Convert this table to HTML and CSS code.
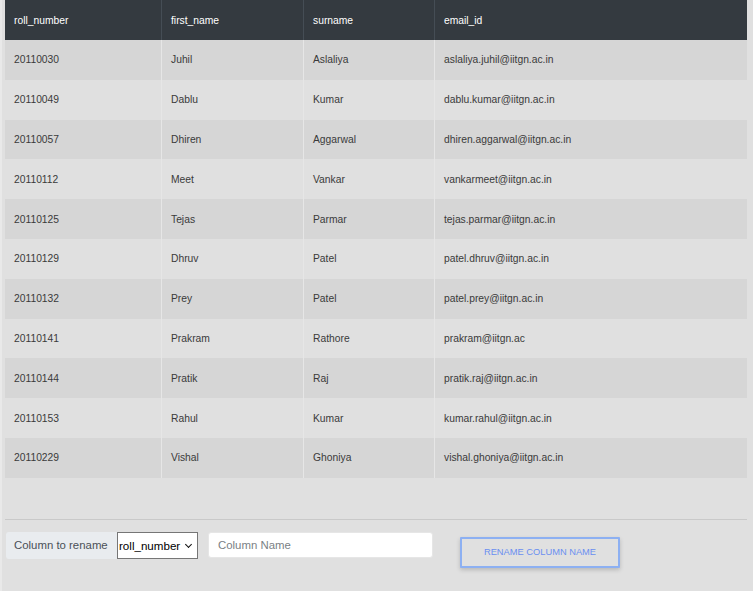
FILE: index.html
```html
<!DOCTYPE html>
<html>
<head>
<meta charset="utf-8">
<link rel="stylesheet" href="styles.css">
</head>
<body>
<div class="page">
  <table class="data">
    <thead>
      <tr><th class="c1">roll_number</th><th class="c2">first_name</th><th class="c3">surname</th><th class="c4">email_id</th></tr>
    </thead>
    <tbody>
      <tr><td>20110030</td><td>Juhil</td><td>Aslaliya</td><td>aslaliya.juhil@iitgn.ac.in</td></tr>
      <tr><td>20110049</td><td>Dablu</td><td>Kumar</td><td>dablu.kumar@iitgn.ac.in</td></tr>
      <tr><td>20110057</td><td>Dhiren</td><td>Aggarwal</td><td>dhiren.aggarwal@iitgn.ac.in</td></tr>
      <tr><td>20110112</td><td>Meet</td><td>Vankar</td><td>vankarmeet@iitgn.ac.in</td></tr>
      <tr><td>20110125</td><td>Tejas</td><td>Parmar</td><td>tejas.parmar@iitgn.ac.in</td></tr>
      <tr><td>20110129</td><td>Dhruv</td><td>Patel</td><td>patel.dhruv@iitgn.ac.in</td></tr>
      <tr><td>20110132</td><td>Prey</td><td>Patel</td><td>patel.prey@iitgn.ac.in</td></tr>
      <tr><td>20110141</td><td>Prakram</td><td>Rathore</td><td>prakram@iitgn.ac</td></tr>
      <tr><td>20110144</td><td>Pratik</td><td>Raj</td><td>pratik.raj@iitgn.ac.in</td></tr>
      <tr><td>20110153</td><td>Rahul</td><td>Kumar</td><td>kumar.rahul@iitgn.ac.in</td></tr>
      <tr><td>20110229</td><td>Vishal</td><td>Ghoniya</td><td>vishal.ghoniya@iitgn.ac.in</td></tr>
    </tbody>
  </table>
  <hr class="sep">
  <div class="form-row">
    <div class="group">
      <span class="group-label">Column to rename</span>
      <span class="select-wrap">
        <select class="col-select">
          <option>roll_number</option>
          <option>first_name</option>
          <option>surname</option>
          <option>email_id</option>
        </select>
      </span>
    </div>
    <input class="name-input" type="text" placeholder="Column Name">
    <button class="rename-btn">RENAME COLUMN NAME</button>
  </div>
</div>
</body>
</html>
```

FILE: styles.css
```css
html, body {
  margin: 0;
  padding: 0;
  height: 100%;
  background: #e9e9e9;
  font-family: "Liberation Sans", Arial, sans-serif;
}
.page {
  margin-left: 2px;
  min-height: 591px;
  background: #e0e0e0;
  padding: 0 6px 0 3px;
  box-sizing: border-box;
}
.data {
  width: 742px;
  border-collapse: collapse;
  font-size: 10.3px;
  color: #3a3a3a;
}
.data th {
  background: #343a40;
  color: #ffffff;
  font-weight: normal;
  text-align: left;
  height: 40px;
  padding: 0 0 0 9px;
  border-left: 1px solid #454d55;
}
.data th:first-child, .data td:first-child { border-left: none; }
.data th.c1 { width: 147px; }
.data th.c2 { width: 132px; }
.data th.c3 { width: 121px; }
.data td {
  height: 39.8px;
  padding: 0 0 0 9px;
  border-left: 1px solid #e6e6e6;
}
.data tbody tr:nth-child(odd) td { background: #d6d6d6; }
.data tbody tr:nth-child(even) td { background: #e0e0e0; }
.sep {
  margin: 41px 0 0 0;
  border: none;
  border-top: 1px solid #c9c9c9;
  width: 742px;
}
.form-row {
  display: flex;
  align-items: flex-start;
  padding-top: 12px;
  padding-left: 1px;
}
.group {
  display: flex;
  align-items: stretch;
  height: 27px;
}
.group-label {
  display: flex;
  align-items: center;
  background: #e9ecef;
  color: #495057;
  font-size: 11.4px;
  padding: 0 8px 0 8px;
  width: 111px;
  box-sizing: border-box;
  border-radius: 3px 0 0 3px;
}
.select-wrap {
  position: relative;
  display: flex;
}
.select-wrap::after {
  content: "";
  position: absolute;
  right: 7px;
  top: 10px;
  width: 4px;
  height: 4px;
  border-right: 1.6px solid #111;
  border-bottom: 1.6px solid #111;
  transform: rotate(45deg);
  pointer-events: none;
}
.col-select {
  -webkit-appearance: none;
  appearance: none;
  width: 81px;
  height: 27px;
  box-sizing: border-box;
  font-family: "Liberation Sans", Arial, sans-serif;
  font-size: 11.6px;
  color: #000;
  background: #fff;
  border: 1px solid #767676;
  border-radius: 0;
  padding: 0 14px 0 1px;
  margin: 0;
}
.name-input {
  margin-left: 10px;
  width: 225px;
  height: 26px;
  box-sizing: border-box;
  border: 1px solid #e6e6e6;
  border-radius: 3px;
  background: #fff;
  padding: 0 9px;
  font-family: "Liberation Sans", Arial, sans-serif;
  font-size: 11.4px;
  color: #495057;
}
.name-input::placeholder { color: #7a7f85; }
.rename-btn {
  margin-left: 27px;
  margin-top: 5px;
  width: 160px;
  height: 31px;
  box-sizing: border-box;
  background: #e0e0e0;
  border: 2px solid #8db0f2;
  border-radius: 1px;
  color: #6a8ff0;
  font-family: "Liberation Sans", Arial, sans-serif;
  font-size: 9.3px;
  box-shadow: 0 2px 4px rgba(0,0,0,0.18);
  padding: 0;
}
```
